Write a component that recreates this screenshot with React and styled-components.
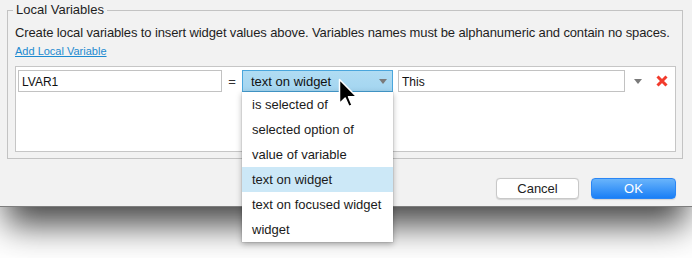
import styled, { createGlobalStyle } from 'styled-components';

const GlobalStyle = createGlobalStyle`
  body {
    margin: 0;
    background: #ffffff;
    font-family: "Liberation Sans", Arial, sans-serif;
    font-size: 13px;
    color: #222;
  }
`;

const options = [
  'is selected of',
  'selected option of',
  'value of variable',
  'text on widget',
  'text on focused widget',
  'widget',
];

export default function App() {
  return (
    <>
      <GlobalStyle />
      <Page>
        <Window>
          <Group>
            <Legend>Local Variables</Legend>
            <Description>
              Create local variables to insert widget values above. Variables names must be alphanumeric and contain no spaces.
            </Description>
            <AddLink href="#">Add Local Variable</AddLink>
            <VarBox>
              <VarRow>
                <TextInput $width={204} defaultValue="LVAR1" />
                <Equals>=</Equals>
                <SelectWrap>
                  <Select>
                    <span>text on widget</span>
                    <Caret />
                  </Select>
                  <Menu>
                    {options.map((o, i) => (
                      <MenuItem key={o} $active={i === 3}>{o}</MenuItem>
                    ))}
                  </Menu>
                  <Cursor viewBox="0 0 13 20" width="19.5" height="30">
                    <path
                      d="M1 1 V17 L4.8 13.3 L7.3 19 L9.4 18.1 L7 12.5 H12.4 Z"
                      fill="#000"
                      stroke="#fff"
                      strokeWidth="1"
                      strokeLinejoin="round"
                    />
                  </Cursor>
                </SelectWrap>
                <TextInput $width={227} defaultValue="This" />
                <DropButton><Caret /></DropButton>
                <RemoveButton>
                  <svg width="12" height="12" viewBox="0 0 12 12">
                    <path d="M1.5 1.5 L10.5 10.5 M10.5 1.5 L1.5 10.5" stroke="#f23b2c" strokeWidth="3" />
                  </svg>
                </RemoveButton>
              </VarRow>
            </VarBox>
          </Group>
          <Buttons>
            <Button>Cancel</Button>
            <Button $primary>OK</Button>
          </Buttons>
        </Window>
      </Page>
    </>
  );
}

const Page = styled.div`
  width: 692px;
  height: 258px;
  overflow: hidden;
  background: #fff;
`;

const Window = styled.div`
  position: relative;
  box-sizing: border-box;
  height: 207px;
  padding: 2px 9px 0 7px;
  background: #f2f2f2;
  border-bottom: 1px solid #7e7e7e;
  box-shadow: 0 24px 32px -6px rgba(0, 0, 0, 0.72);
`;

const Group = styled.fieldset`
  margin: 0;
  padding: 0 6px 6px 7px;
  border: 1px solid #c3c3c3;
  min-width: 0;
`;

const Legend = styled.legend`
  margin-left: -2px;
  padding: 0 3px;
  line-height: 16px;
  font-size: 13px;
  color: #1e1e1e;
`;

const Description = styled.div`
  margin-top: 7px;
  line-height: 16px;
  letter-spacing: -0.12px;
  color: #1e1e1e;
  white-space: nowrap;
`;

const AddLink = styled.a`
  display: inline-block;
  margin-top: 3px;
  font-size: 11px;
  line-height: 14px;
  color: #1d8ad0;
  text-decoration: underline;
`;

const VarBox = styled.div`
  box-sizing: border-box;
  margin-top: 8px;
  height: 86px;
  border: 1px solid #c6c6c6;
  background: #fff;
  padding: 3px 2px;
`;

const VarRow = styled.div`
  display: flex;
  align-items: center;
  height: 22px;
`;

const TextInput = styled.input`
  box-sizing: border-box;
  width: ${(p) => p.$width}px;
  height: 22px;
  margin: 0;
  padding: 2px 3px 0;
  border: 1px solid #c2c2c2;
  background: #fff;
  font-family: "Liberation Sans", Arial, sans-serif;
  font-size: 12px;
  color: #111;
  outline: none;
`;

const Equals = styled.span`
  width: 20px;
  text-align: center;
  color: #333;
`;

const SelectWrap = styled.div`
  position: relative;
  margin-right: 5px;
`;

const Select = styled.div`
  box-sizing: border-box;
  width: 151px;
  height: 22px;
  display: flex;
  align-items: center;
  justify-content: space-between;
  padding: 0 5px 0 8px;
  border: 1px solid #4aa6dc;
  background: linear-gradient(#b0dcf3, #a3d5f0);
  color: #111;
`;

const Caret = styled.span`
  width: 0;
  height: 0;
  border-left: 4px solid transparent;
  border-right: 4px solid transparent;
  border-top: 5px solid #7a7a7a;
`;

const Menu = styled.ul`
  position: absolute;
  top: 22px;
  left: 0;
  width: 151px;
  margin: 0;
  padding: 0;
  list-style: none;
  background: #fff;
  box-shadow: 0 2px 6px rgba(0, 0, 0, 0.3), 0 0 0 0.5px rgba(0, 0, 0, 0.12);
  z-index: 2;
`;

const MenuItem = styled.li`
  height: 25px;
  line-height: 25px;
  padding-left: 10px;
  color: #1a1a1a;
  background: ${(p) => (p.$active ? '#cce8f7' : 'transparent')};
  white-space: nowrap;
`;

const Cursor = styled.svg`
  position: absolute;
  left: 96px;
  top: 8px;
  z-index: 3;
`;

const DropButton = styled.span`
  width: 26px;
  display: flex;
  justify-content: center;
`;

const RemoveButton = styled.span`
  display: flex;
  margin-left: 5px;
`;

const Buttons = styled.div`
  display: flex;
  justify-content: flex-end;
  gap: 12px;
  padding: 19px 7px 0 0;
`;

const Button = styled.button`
  box-sizing: border-box;
  width: ${(p) => (p.$primary ? 85 : 83)}px;
  height: 21px;
  margin: 0;
  padding: 0;
  border-radius: 4px;
  font-family: "Liberation Sans", Arial, sans-serif;
  font-size: 13px;
  color: ${(p) => (p.$primary ? '#fff' : '#222')};
  border: 1px solid ${(p) => (p.$primary ? '#2a86f5' : '#c8c8c8')};
  background: ${(p) =>
    p.$primary ? 'linear-gradient(#69b4fb, #1a7ff6)' : '#fff'};
  box-shadow: 0 0.5px 1px rgba(0, 0, 0, 0.12);
`;
